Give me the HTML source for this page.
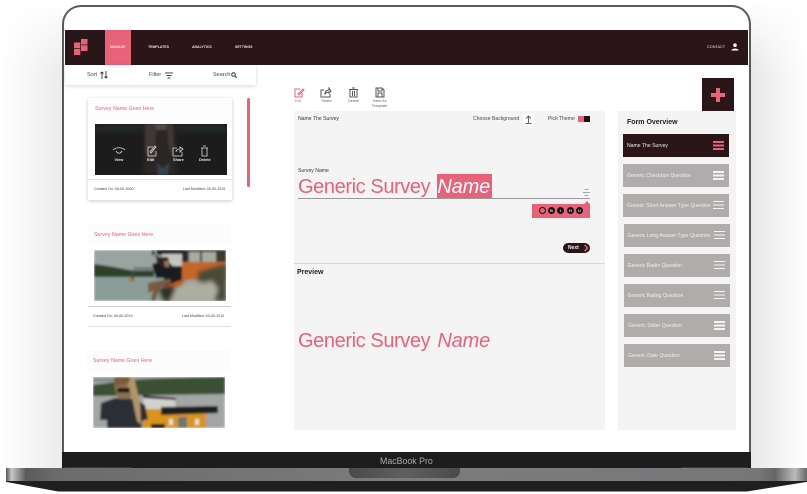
<!DOCTYPE html>
<html><head><meta charset="utf-8"><style>
html,body{margin:0;padding:0}
body{width:807px;height:494px;overflow:hidden;background:#fff;position:relative;font-family:"Liberation Sans",sans-serif}
#w{position:absolute;left:0;top:0;width:807px;height:494px;filter:blur(.3px)}
.a{position:absolute}
.t{position:absolute;white-space:nowrap;line-height:1}
.nav{color:#e8e2e3;font-size:3.500px;font-weight:bold;top:45.500px}
.item{position:absolute;width:106px;height:23px;background:#b0acac;color:#f1efef;font-size:5.100px;line-height:24px;text-indent:4px;box-sizing:border-box;white-space:nowrap}
.item i{position:absolute;right:5px;top:7px;width:11px;height:1.500px;background:#f4f2f2;box-shadow:0 3.500px 0 #f4f2f2,0 7px 0 #f4f2f2}
.foot{font-size:3.650px;color:#444;top:187.500px}
.ic{position:absolute;fill:none;stroke:#555;stroke-width:1}
.lab{position:absolute;font-size:3.800px;color:#666;text-align:center;line-height:5px;white-space:nowrap}
.dot{position:absolute;top:207px;width:7px;height:7px;border-radius:50%;background:#1a1013;color:#ddd;font-size:4px;line-height:7px;text-align:center;font-weight:bold}
.ttl{font-size:5.300px;color:#e8627a}
.ov{font-size:3.900px;color:#eee;font-weight:bold;top:157.500px}
.big{font-size:20px;letter-spacing:-.4px;color:#e8627a}
.big span{font-style:italic;letter-spacing:-.15px;margin-left:2px}
</style></head><body><div id="w">
<div class="a" style="left:0;top:0;width:62px;height:468px;background:linear-gradient(90deg,#fff,#ececec);-webkit-mask-image:linear-gradient(transparent,#000 70px);mask-image:linear-gradient(transparent,#000 70px)"></div>
<div class="a" style="left:751px;top:0;width:56px;height:468px;background:linear-gradient(90deg,#e8e8e8,#fff);-webkit-mask-image:linear-gradient(transparent,#000 70px);mask-image:linear-gradient(transparent,#000 70px)"></div>

<div class="a" style="left:62px;top:4.500px;width:689px;height:470px;box-sizing:border-box;background:#fff;border:2.500px solid #5a5a5c;border-bottom:0;border-radius:19px 19px 0 0"></div>
<div class="a" style="left:65px;top:30px;width:683px;height:34.500px;background:#2a1519"></div>
<div class="a" style="left:105px;top:30px;width:26px;height:34.500px;background:#e8627a"></div>
<svg class="a" style="left:74px;top:38px" width="15" height="18"><path fill="#e8627a" d="M7 1h6.500v5.500H7zM7 7.300h6.500V13H7zM0 4.500h6.300V10H0zM0 10.800h6.300V17H0z"/></svg>
<div class="t nav" style="left:110px">MANAGE</div>
<div class="t nav" style="left:148px">TEMPLATES</div>
<div class="t nav" style="left:192px">ANALYTICS</div>
<div class="t nav" style="left:235px">SETTINGS</div>
<div class="t nav" style="left:707px;font-weight:normal;font-size:3.800px">CONTACT</div>
<svg class="a" style="left:731px;top:43px" width="8" height="8"><circle cx="4" cy="2.200" r="1.800" fill="#fff"/><path fill="#fff" d="M.5 7.500C.5 5 7.500 5 7.500 7.500z"/></svg>

<div class="a" style="left:65px;top:65px;width:191px;height:20px;background:#fff;box-shadow:0 1px 4px rgba(0,0,0,.16)"></div>
<div class="t" style="left:87px;top:73px;font-size:5.500px;color:#444">Sort</div>
<svg class="a" style="left:100px;top:71px" width="8" height="8"><path fill="none" stroke="#333" stroke-width=".9" d="M2 8V1M.5 2.500L2 1l1.500 1.500M6 0v7M4.500 5.500L6 7l1.500-1.500"/></svg>
<div class="t" style="left:149px;top:73px;font-size:5.500px;color:#444">Filter</div>
<svg class="a" style="left:165px;top:71.500px" width="8" height="8"><path stroke="#444" d="M0 1h8M1.500 3.500h5M2.500 6h3"/></svg>
<div class="t" style="left:213px;top:73px;font-size:5.500px;color:#444">Search</div>
<svg class="a" style="left:231px;top:72px" width="6" height="6"><circle cx="2.500" cy="2.500" r="1.800" fill="none" stroke="#333"/><path stroke="#333" d="M4 4l2 2"/></svg>

<div class="a" style="left:255px;top:98px;width:39px;height:332px;background:#fefefe"></div>
<div class="a" style="left:88px;top:98px;width:144px;height:102px;background:#fff;box-shadow:0 1px 4px rgba(0,0,0,.2)"></div>
<div class="a" style="left:88px;top:98px;width:144px;height:21px;background:#fdfdfd"></div>
<div class="t ttl" style="left:95px;top:107px">Survey Name Goes Here</div>
<svg class="a" style="left:94.500px;top:124px" width="132" height="51"><defs><filter id="b" x="-5%" y="-5%" width="110%" height="110%"><feGaussianBlur stdDeviation="1"/></filter><filter id="b2" x="-10%" y="-10%" width="120%" height="120%"><feGaussianBlur stdDeviation="2.500"/></filter></defs><rect width="132" height="51" fill="#1b1c1b"/><g filter="url(#b2)"><rect y="0" width="132" height="9" fill="#242625"/><path fill="#2b2726" d="M50 0h30l2 51H48z"/></g><g filter="url(#b)"><path fill="#3f3935" d="M50 0h11l-1 30-4 8-6-10z"/><path fill="#3d3733" d="M72 0h6l1 22-3 10-3-12z"/><path fill="#544b45" d="M60 0h12l-1 6h-10z"/><path fill="#35434d" d="M62 39l6 5 7-6-2 13H63z"/></g></svg>
<svg class="a" style="left:111px;top:144px" width="110" height="14" fill="none" stroke="#ddd" stroke-width=".8"><path d="M2 6c3-3 9-3 12 0M5 7c2 3 4 3 6 0"/><path d="M42 3h-5v9h8V7M39 8l5-6 1 1-5 6z"/><path d="M66 4h-4v8h9V8M65 8c0-2 2-3 4-3V3l3 2-3 3V6"/><path d="M90 4h7M91 4v8h5V4M92 2h3"/></svg>
<div class="t ov" style="left:114.500px">View</div>
<div class="t ov" style="left:147px">Edit</div>
<div class="t ov" style="left:173px">Share</div>
<div class="t ov" style="left:199px">Delete</div>
<div class="a" style="left:88px;top:178.500px;width:144px;height:1.500px;background:#ddd"></div>
<div class="t foot" style="left:94px">Created On: 00-00-2000</div>
<div class="t foot" style="left:183px">Last Modified: 00-00-2019</div>
<div class="a" style="left:247px;top:98px;width:3px;height:89px;background:#e8627a;border-radius:2px"></div>

<div class="a" style="left:88px;top:224px;width:143px;height:21px;background:#fcfcfc"></div>
<div class="t ttl" style="left:94px;top:232.500px">Survey Name Goes Here</div>
<svg class="a" style="left:93.500px;top:250px" width="132" height="51"><clipPath id="c"><rect width="132" height="51"/></clipPath><g clip-path="url(#c)"><g filter="url(#b)"><rect width="132" height="26" fill="#9aa39f"/><rect y="26" width="132" height="25" fill="#8a9d98"/><path fill="#2e3f2a" d="M0 14l20 3 20 4 20-1v7H0z"/><path fill="#6f7f78" d="M40 17h20v4H40z"/><path fill="#3d4a4a" d="M37 20h3v9h-3z"/><path fill="#a87a4a" d="M34 29h7v3h-7z"/><path fill="#222" d="M58 0h74v5H58zM60 0l5 20h2L62 0zM88 0h4v14h-4z"/><path fill="#c4c6c0" d="M68 4h20v13H68z"/><path fill="#a8aca0" d="M92 2h30v9H92z"/><path fill="#3a3a32" d="M92 0h3v12h-3zM106 0h2v12h-2zM122 0h10v14h-10z"/><path fill="#c5662c" d="M88 12h44v18H92l-4 4z"/><path fill="#1e1c1c" d="M70 16h18v20H70z"/><path fill="#181a22" d="M58 14l14-4 6 5-2 13H62z"/><path fill="#2a2422" d="M64 7h10l2 8-8 3-4-6z"/><path fill="#9c7256" d="M70 11h5v6h-4z"/><path fill="#7d5a44" d="M54 33l14-3 8-1 1 4-11 4-5 14h-4l2-10-5 2z"/><path fill="#b5602a" d="M68 37l22-8-2 8-18 4z"/></g><g filter="url(#b2)"><path fill="#4a4a34" d="M104 51V22l28-8v37z"/><path fill="#2e2e24" d="M64 38l16-2 2 15H70z"/><path fill="#aeada2" d="M76 51l6-12 14-8 14 2 8-2 6 8-4 12z"/></g></g></svg>
<div class="a" style="left:88px;top:305.500px;width:143px;height:1.500px;background:#ccc"></div>
<div class="t foot" style="left:93px;top:314.500px">Created On: 00-00-2019</div>
<div class="t foot" style="left:182px;top:314.500px">Last Modified: 00-00-2019</div>
<div class="a" style="left:88px;top:326px;width:143px;height:1px;background:#ddd"></div>

<div class="a" style="left:87px;top:350px;width:143px;height:21px;background:#fcfcfc"></div>
<div class="t ttl" style="left:93px;top:359px">Survey Name Goes Here</div>
<svg class="a" style="left:93px;top:377px" width="132" height="51"><clipPath id="d"><rect width="132" height="51"/></clipPath><g clip-path="url(#d)"><g filter="url(#b)"><rect width="132" height="51" fill="#a3a6a4"/><rect width="132" height="5" fill="#8c938c"/><path fill="#3a5034" d="M0 8l30-4 30-2 30-1 42-1v17l-132 2z"/><path fill="#cfd2ce" d="M50 20l32 2 1 10H50z"/><path fill="#2a2622" d="M50 18l33 3v2l-33-2z"/><path fill="#d8941f" d="M50 32h63v19H50z"/><path fill="#1f1f22" d="M68 30l57-1v7l-57 2z"/><path fill="#6d7578" d="M85 40h9v11h-9z"/><path fill="#1c1a1a" d="M58 47h14v4H58z"/><path fill="#e6e0d0" d="M76 42h4v6h-4zM102 42h4v6h-4z"/><path fill="#2b2f34" d="M8 26l14-5 20 1 10 6 3 14-6 2v7H14v-8l-7 0z"/><path fill="#8a7050" d="M21 0h18l2 8-4 14H26l-4-8z"/><path fill="#b3946a" d="M32 0h9l6 26 1 22-4-4-5-24z"/><path fill="#7a5c3e" d="M21 0h16l-1 6-14 3z"/><rect x="24" y="11" width="13" height="4.500" rx="2" fill="#191919"/></g></g></svg>

<svg class="ic" style="left:293px;top:86.500px;stroke:#e8627a" width="12" height="11"><path d="M7 2H2v8h7V6M5 7l5-5 1 1-5 5z"/></svg>
<div class="lab" style="left:288px;top:98.500px;width:20px;color:#e8627a">Edit</div>
<svg class="ic" style="left:320px;top:86.500px" width="12" height="11"><path d="M4 3H1v7h9V7M5 7c0-3 2-4 4-4V1l2 3-2 2V5C7 5 6 6 5 7z"/></svg>
<div class="lab" style="left:316.500px;top:98.500px;width:20px">Share</div>
<svg class="ic" style="left:348px;top:86.500px" width="11" height="11"><path d="M1 2.500h9M2 3v7h7V3M4 1h3M4.500 4v5M6.500 4v5"/></svg>
<div class="lab" style="left:343.500px;top:98.500px;width:20px">Delete</div>
<svg class="ic" style="left:374.500px;top:86.500px" width="10" height="11"><path d="M1 1h6l2 2v7H1zM3 1v3h4V1M3 10V6h4v4"/></svg>
<div class="lab" style="left:369.500px;top:98.500px;width:20px">Save As<br>Template</div>

<div class="a" style="left:702px;top:78px;width:32px;height:34px;background:#2a1519"></div>
<div class="a" style="left:711px;top:93px;width:14px;height:4px;background:#e8627a"></div>
<div class="a" style="left:716px;top:88px;width:4px;height:14px;background:#e8627a"></div>

<div class="a" style="left:294px;top:111px;width:311px;height:319px;background:#f4f4f4"></div>
<div class="t" style="left:298px;top:117px;font-size:5.100px;color:#333">Name The Survey</div>
<div class="t" style="left:473px;top:117px;font-size:5.100px;color:#444">Choose Background</div>
<div class="a" style="left:523px;top:114px;width:11px;height:11px;background:#fff"></div>
<svg class="a" style="left:525px;top:115px" width="7" height="9"><path fill="none" stroke="#666" d="M3.500 8V1M1 3.500L3.500 1 6 3.500M.5 8.500h6"/></svg>
<div class="t" style="left:548px;top:117px;font-size:5.100px;color:#444">Pick Theme</div>
<div class="a" style="left:578px;top:116px;width:6px;height:6px;background:#e8627a"></div>
<div class="a" style="left:584px;top:116px;width:6px;height:6px;background:#1f1215"></div>
<div class="t" style="left:298px;top:169px;font-size:5.100px;color:#333">Survey Name</div>
<div class="a" style="left:436.700px;top:174px;width:55px;height:24px;background:#e8627a"></div>
<div class="t big" style="left:298px;top:176.500px">Generic Survey <span style="color:#fff">Name</span></div>
<div class="a" style="left:298px;top:198px;width:292px;height:1px;background:#999"></div>
<svg class="a" style="left:582px;top:188px" width="9" height="9"><path fill="none" stroke="#aaa" d="M1 4.500h7M2.500 1.500h4M2.500 7.500h4"/></svg>
<div class="a" style="left:532px;top:204px;width:58px;height:13.500px;background:#e8627a"></div>
<div class="a" style="left:585px;top:201.500px;width:4px;height:4px;background:#e8627a;transform:rotate(45deg)"></div>
<div class="dot" style="left:539px;background:none;border:1px solid #1a1013;width:5px;height:5px"></div>
<div class="dot" style="left:548px">B</div>
<div class="dot" style="left:557px">I</div>
<div class="dot" style="left:567px">H</div>
<div class="dot" style="left:576px">U</div>
<div class="a" style="left:563px;top:243px;width:27px;height:10px;background:#2a1519;border-radius:5px"></div>
<div class="t" style="left:568px;top:245.500px;font-size:5px;color:#eee;font-weight:bold">Next</div>
<svg class="a" style="left:583px;top:244px" width="6" height="8"><path fill="none" stroke="#e8627a" stroke-width="1.500" d="M1.500 1l3 3-3 3"/></svg>
<div class="a" style="left:294px;top:263px;width:311px;height:1px;background:#d8d8d8"></div>
<div class="t" style="left:297px;top:268.500px;font-size:7px;color:#222;font-weight:bold">Preview</div>
<div class="t big" style="left:298px;top:331px">Generic Survey <span>Name</span></div>

<div class="a" style="left:618px;top:111px;width:118px;height:319px;background:#f4f4f4"></div>
<div class="t" style="left:627px;top:118.500px;font-size:7px;color:#222;font-weight:bold">Form Overview</div>
<div class="item" style="left:623px;top:134px;background:#2a1519;color:#eee">Name The Survey<i style="background:#e8627a;box-shadow:0 3.500px 0 #e8627a,0 7px 0 #e8627a"></i></div>
<div class="item" style="left:623px;top:164px">Generic Checkbox Question<i></i></div>
<div class="item" style="left:623px;top:193.500px">Generic Short Answer Type Question<i></i></div>
<div class="item" style="left:623.500px;top:223.500px">Generic Long Answer Type Question<i></i></div>
<div class="item" style="left:623.500px;top:253.500px">Generic Radio Question<i></i></div>
<div class="item" style="left:623.500px;top:283.500px">Generic Rating Question<i></i></div>
<div class="item" style="left:624px;top:314px">Generic Slider Question<i></i></div>
<div class="item" style="left:624px;top:344px">Generic Date Question<i></i></div>

<div class="a" style="left:62px;top:452px;width:689px;height:17px;background:#1d1d1d"></div>
<div class="a" style="left:64px;top:466.500px;width:68px;height:2px;background:#3a3a3a;border-radius:2px 2px 0 0"></div>
<div class="a" style="left:681px;top:466.500px;width:67px;height:2px;background:#3a3a3a;border-radius:2px 2px 0 0"></div>
<div class="t" style="left:380px;top:457px;font-size:8.800px;color:#aaa">MacBook Pro</div>
<div class="a" style="left:6px;top:468px;width:801px;height:13px;background:linear-gradient(90deg,#555,#c8c8c8 .7%,#5a5a5c 2.500%,#6b6b6d 6%,#7c7c7e 50%,#77777a 94%,#666 96%,#bbb 98.500%,#666)"></div>
<div class="a" style="left:349px;top:468px;width:111px;height:10px;background:linear-gradient(90deg,#4a4a4c,#5f5f61 50%,#4a4a4c);border-radius:0 0 7px 7px"></div>
<div class="a" style="left:6px;top:481px;width:801px;height:10.500px;background:#1f1f20;clip-path:polygon(0 0,100% 0,100% 8%,92.500% 100%,6.500% 100%,0 8%)"></div>
</div></body></html>
